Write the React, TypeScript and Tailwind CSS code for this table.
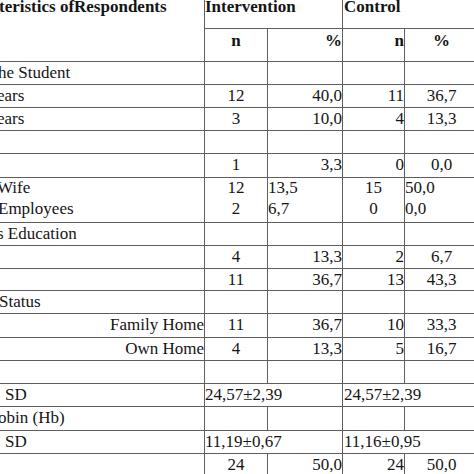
const cols = "grid grid-cols-[204px_63px_75px_62px_74px] w-[478px]";
const line = "border-[#5e5e5e]";

type Row = {
  label: string;
  h: string;
  right?: boolean;
  shift?: string;
  cells?: [string, string, string, string];
  merged?: [string, string];
};

const rows: Row[] = [
  { label: "he Student", h: "h-[23px]", shift: "-ml-[2px]" },
  { label: "ears", h: "h-[23px]", shift: "-ml-[3px]", cells: ["12", "40,0", "11", "36,7"] },
  { label: "ears", h: "h-[23px]", shift: "-ml-[3px]", cells: ["3", "10,0", "4", "13,3"] },
  { label: "", h: "h-[23px]" },
  { label: "", h: "h-[24px]", cells: ["1", "3,3", "0", "0,0"] },
];

const rows2: Row[] = [
  { label: "s Education", h: "h-[23px]", shift: "-ml-[3px]" },
  { label: "", h: "h-[23px]", cells: ["4", "13,3", "2", "6,7"] },
  { label: "", h: "h-[22px]", cells: ["11", "36,7", "13", "43,3"] },
  { label: "Status", h: "h-[23px]", shift: "-ml-[1px]" },
  { label: "Family Home", h: "h-[24px]", right: true, cells: ["11", "36,7", "10", "33,3"] },
  { label: "Own Home", h: "h-[23px]", right: true, cells: ["4", "13,3", "5", "16,7"] },
  { label: "", h: "h-[23px]" },
  { label: "SD", h: "h-[23px]", shift: "pl-[5px]", merged: ["24,57±2,39", "24,57±2,39"] },
  { label: "obin (Hb)", h: "h-[24px]", shift: "-ml-[2px]" },
  { label: "SD", h: "h-[23px]", shift: "pl-[5px]", merged: ["11,19±0,67", "11,16±0,95"] },
  { label: "", h: "h-[23px]", cells: ["24", "50,0", "24", "50,0"] },
];

function DataRow({ row }: { row: Row }) {
  const cell = `border-l ${line} whitespace-nowrap overflow-hidden`;
  return (
    <div className={`${cols} ${row.h} border-b ${line} leading-[22px]`}>
      <div className={`whitespace-nowrap ${row.right ? "text-right" : "text-left"}`}>
        <div className={row.shift}>{row.label}</div>
      </div>
      {row.merged ? (
        <>
          <div className={`${cell} col-span-2 text-left`}>{row.merged[0]}</div>
          <div className={`${cell} col-span-2 text-left pl-[1px]`}>{row.merged[1]}</div>
        </>
      ) : (
        <>
          <div className={`${cell} text-center`}>{row.cells?.[0]}</div>
          <div className={`${cell} text-right`}>{row.cells?.[1]}</div>
          <div className={`${cell} text-right`}>{row.cells?.[2]}</div>
          <div className={`${cell} text-center`}>{row.cells?.[3]}</div>
        </>
      )}
    </div>
  );
}

export default function App() {
  const cell = `border-l ${line} whitespace-nowrap`;
  return (
    <div className="w-[474px] h-[474px] overflow-hidden bg-white text-[#151515] text-[17px] font-['Liberation_Serif',serif]">
      <div className={`${cols} grid-rows-[29px_33px] font-bold`}>
        <div className={`row-span-2 border-b ${line} whitespace-nowrap`}>
          <div className="-mt-[2px] leading-[17px] -ml-[1px]">teristics ofRespondents</div>
        </div>
        <div className={`${cell} col-span-2 border-b`}>
          <div className="-mt-[2px] leading-[17px]">Intervention</div>
        </div>
        <div className={`${cell} col-span-2 border-b`}>
          <div className="-mt-[2px] leading-[17px] pl-[1px]">Control</div>
        </div>
        <div className={`${cell} border-b text-center leading-[23px]`}>n</div>
        <div className={`${cell} border-b text-right leading-[23px]`}>%</div>
        <div className={`${cell} border-b text-right leading-[23px]`}>n</div>
        <div className={`${cell} border-b text-center leading-[23px]`}>%</div>
      </div>

      {rows.map((r, i) => (
        <DataRow key={`a${i}`} row={r} />
      ))}

      <div className={`${cols} h-[45px] border-b ${line} leading-[21px]`}>
        <div className="whitespace-nowrap -mt-[1px]">
          <div className="-ml-[3px]">Wife</div>
          <div className="-ml-[2px]">Employees</div>
        </div>
        <div className={`${cell} text-center`}>
          <div className="-mt-[1px]">12</div>
          <div>2</div>
        </div>
        <div className={`${cell} text-left`}>
          <div className="-mt-[1px]">13,5</div>
          <div>6,7</div>
        </div>
        <div className={`${cell} text-center`}>
          <div className="-mt-[1px]">15</div>
          <div>0</div>
        </div>
        <div className={`${cell} text-left`}>
          <div className="-mt-[1px]">50,0</div>
          <div>0,0</div>
        </div>
      </div>

      {rows2.map((r, i) => (
        <DataRow key={`b${i}`} row={r} />
      ))}
    </div>
  );
}
